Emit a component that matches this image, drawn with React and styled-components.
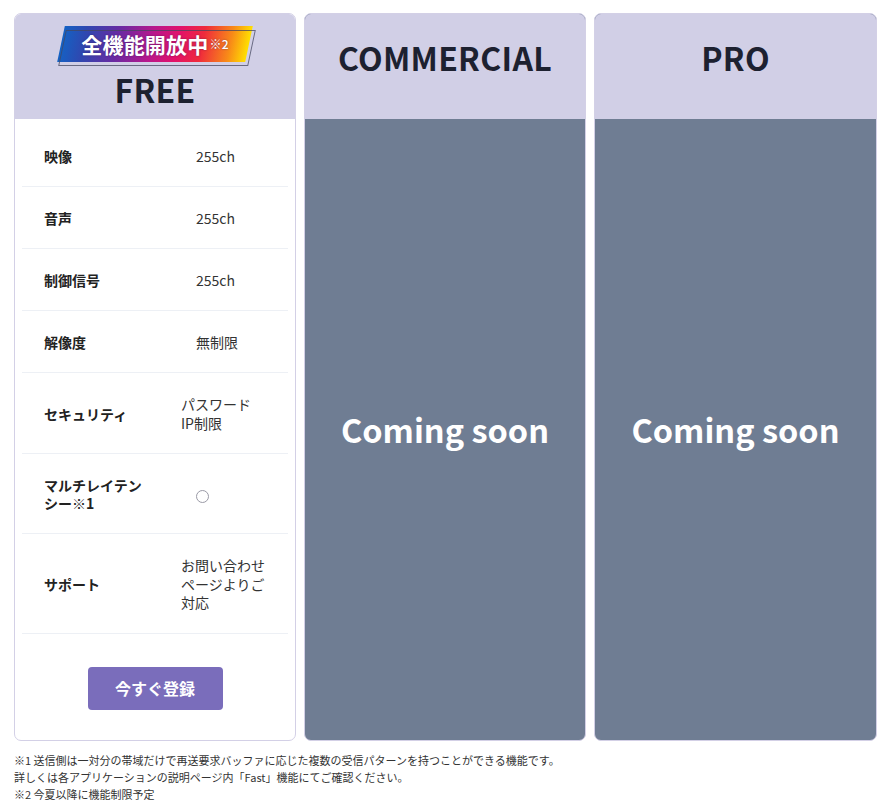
import styled, { createGlobalStyle } from "styled-components";

const Global = createGlobalStyle`
  body {
    margin: 0;
    background: #fff;
    font-family: "Noto Sans CJK JP", "Noto Sans", sans-serif;
    color: #222;
  }
`;

const Page = styled.div`
  padding: 13px 13px 0 14px;
`;

const Plans = styled.div`
  display: grid;
  grid-template-columns: 282px 282px 283px;
  gap: 8px;
`;

const Card = styled.div`
  display: flex;
  flex-direction: column;
  border: 1px solid #d3d0e6;
  border-radius: 7px;
  overflow: hidden;
  background: ${(p) => (p.soon ? "#6f7d93" : "#fff")};
  height: 728px;
  box-sizing: border-box;
`;

const Head = styled.div`
  height: 105px;
  flex-shrink: 0;
  background: #d1cfe6;
  display: flex;
  flex-direction: column;
  align-items: center;
  justify-content: ${(p) => (p.badge ? "flex-start" : "center")};
  padding: ${(p) => (p.badge ? "12px 0 0" : "0 0 20px")};
  box-sizing: border-box;
`;

const Title = styled.h2`
  margin: 0;
  font-size: 32px;
  font-weight: 700;
  line-height: 40px;
  color: #1d2130;
  letter-spacing: 0.3px;
`;

const Badge = styled.div`
  position: relative;
  width: 188px;
  height: 36px;
  margin-bottom: 7px;
  display: flex;
  align-items: center;
  justify-content: center;

  &::before,
  &::after {
    content: "";
    position: absolute;
    inset: 0;
    transform: skewX(-12deg);
  }
  &::after {
    top: 4px;
    bottom: -4px;
    left: 1px;
    right: -3px;
    border: 1.5px solid rgba(70, 72, 96, 0.75);
    z-index: 1;
  }
  &::before {
    background: linear-gradient(
      90deg,
      #1462c4 0%,
      #2f48b0 12%,
      #6a2aa2 30%,
      #b8188c 48%,
      #e2126a 62%,
      #ef2a3c 75%,
      #f88a18 90%,
      #ffe000 100%
    );
    z-index: 0;
  }
`;

const BadgeText = styled.span`
  position: relative;
  z-index: 2;
  color: #fff;
  font-size: 21px;
  font-weight: 700;
  letter-spacing: 0.2px;
  text-shadow: 0 0 2px rgba(40, 20, 80, 0.6);

  small {
    font-size: 12px;
    font-weight: 500;
    margin-left: 1px;
    vertical-align: 4px;
  }
`;

const Body = styled.div`
  padding: 6px 7px 0;
  display: flex;
  flex-direction: column;
`;

const Row = styled.div`
  display: grid;
  grid-template-columns: 137px 92px;
  align-items: center;
  padding: 22px 0 21px 22px;
  border-bottom: 1px solid #edf0f5;
  font-size: 14px;
  line-height: 18px;
`;

const Label = styled.div`
  font-weight: 700;
  color: #222;
  padding-right: 30px;
`;

const Value = styled.div`
  color: #333;
  padding-left: ${(p) => (p.wrap ? 0 : 15)}px;
`;

const Line = styled.div`
  height: 18.5px;
  white-space: nowrap;
`;

const Circle = styled.span`
  display: inline-block;
  width: 11px;
  height: 11px;
  border: 1px solid #9a9aa6;
  border-radius: 50%;
  vertical-align: middle;
`;

const Action = styled.div`
  display: flex;
  justify-content: center;
  padding: 33px 0 0;
`;

const Button = styled.button`
  width: 135px;
  height: 43px;
  border: none;
  border-radius: 4px;
  background: #7a6dbb;
  color: #fff;
  font-family: inherit;
  font-size: 16px;
  font-weight: 700;
  cursor: pointer;
`;

const Soon = styled.div`
  flex: 1;
  display: flex;
  align-items: center;
  justify-content: center;
  color: #fff;
  font-size: 32.5px;
  font-weight: 700;
  padding-bottom: 2px;
`;

const Notes = styled.div`
  margin-top: 11px;
  font-size: 11px;
  line-height: 17px;
  color: #333;
`;

const rows = [
  { label: "映像", value: "255ch" },
  { label: "音声", value: "255ch" },
  { label: "制御信号", value: "255ch" },
  { label: "解像度", value: "無制限" },
  { label: "セキュリティ", value: ["パスワード", "IP制限"], wrap: true },
  { label: "マルチレイテンシー※1", circle: true },
  { label: "サポート", value: ["お問い合わせ", "ページよりご", "対応"], wrap: true },
];

export default function App() {
  return (
    <Page>
      <Global />
      <Plans>
        <Card>
          <Head badge>
            <Badge>
              <BadgeText>
                全機能開放中<small>※2</small>
              </BadgeText>
            </Badge>
            <Title>FREE</Title>
          </Head>
          <Body>
            {rows.map((r) => (
              <Row key={r.label}>
                <Label>{r.label}</Label>
                <Value wrap={r.wrap}>
                  {r.circle ? (
                    <Circle />
                  ) : Array.isArray(r.value) ? (
                    r.value.map((v) => <Line key={v}>{v}</Line>)
                  ) : (
                    r.value
                  )}
                </Value>
              </Row>
            ))}
            <Action>
              <Button>今すぐ登録</Button>
            </Action>
          </Body>
        </Card>
        <Card soon>
          <Head>
            <Title>COMMERCIAL</Title>
          </Head>
          <Soon>Coming soon</Soon>
        </Card>
        <Card soon>
          <Head>
            <Title>PRO</Title>
          </Head>
          <Soon>Coming soon</Soon>
        </Card>
      </Plans>
      <Notes>
        <div>※1 送信側は一対分の帯域だけで再送要求バッファに応じた複数の受信パターンを持つことができる機能です。</div>
        <div>詳しくは各アプリケーションの説明ページ内「Fast」機能にてご確認ください。</div>
        <div>※2 今夏以降に機能制限予定</div>
      </Notes>
    </Page>
  );
}
